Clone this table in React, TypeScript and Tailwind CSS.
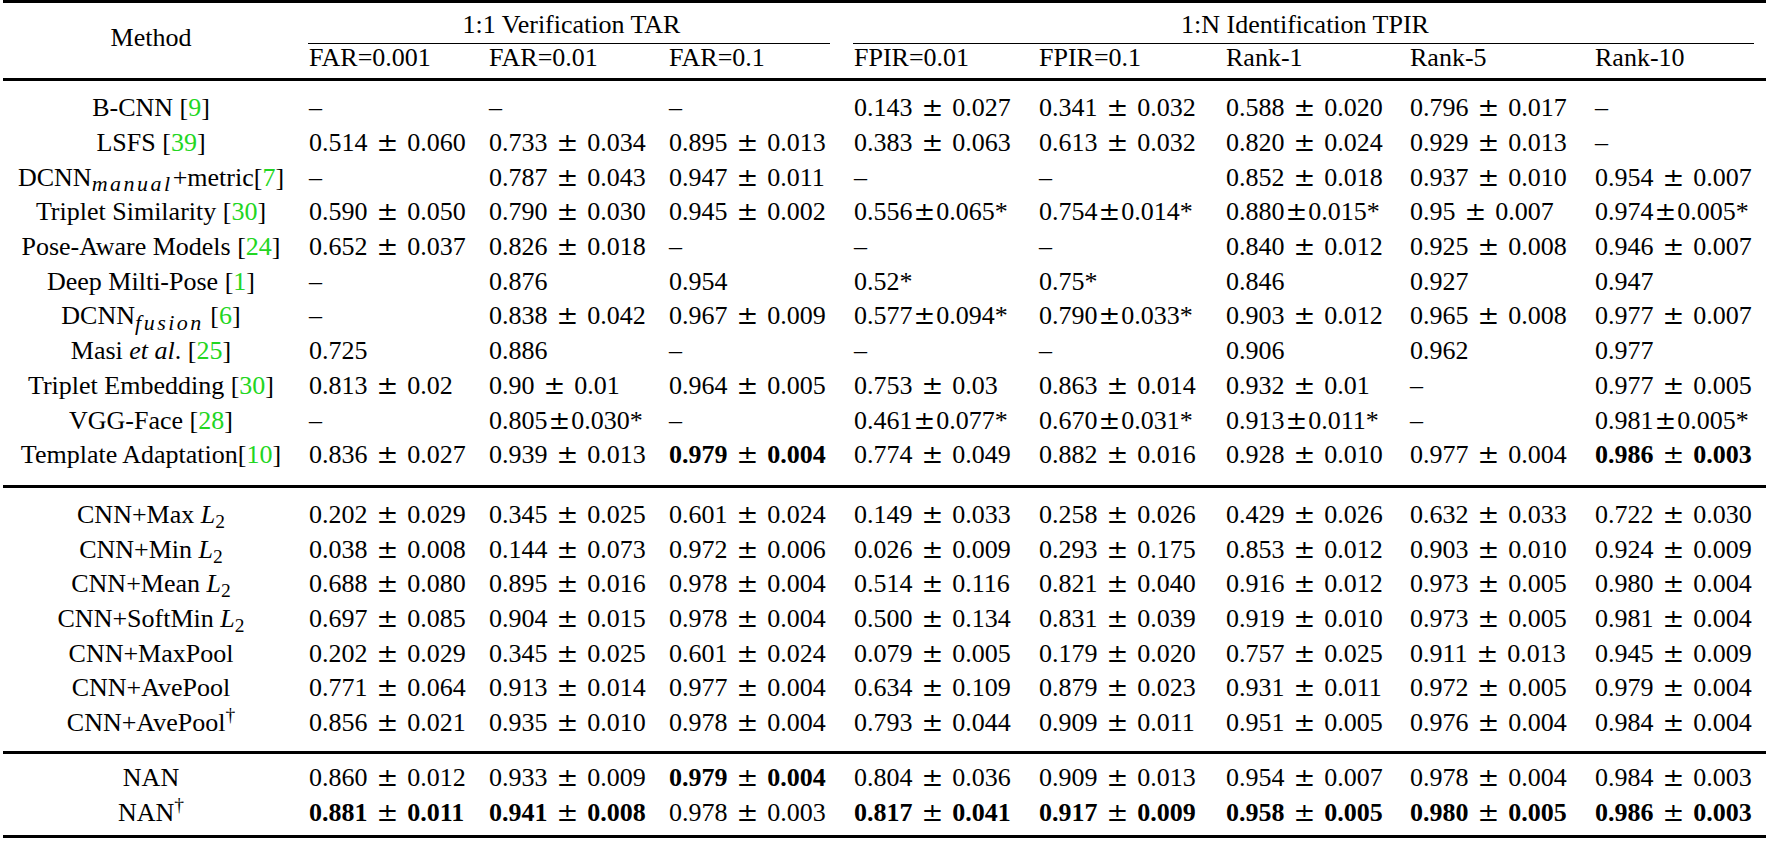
import type { ReactNode } from 'react'

const cols = 'grid grid-cols-[296px_180px_180px_185px_185px_187px_184px_185px_181px]'

function Cite({ n }: { n: string }) {
  return (
    <>
      [<span className="text-[#22d622]">{n}</span>]
    </>
  )
}

function L2() {
  return (
    <>
      <i>L</i>
      <sub>2</sub>
    </>
  )
}

function Value({ v }: { v: string }) {
  const bold = v.startsWith('!')
  const text = bold ? v.slice(1) : v
  let content: ReactNode = text

  if (text.includes(' ± ')) {
    const [a, b] = text.split(' ± ')
    content = (
      <>
        {a}
        <span className="mx-[9px] font-['DejaVu_Serif'] font-normal leading-none">±</span>
        {b}
      </>
    )
  } else if (text.includes('±')) {
    const [a, b] = text.split('±')
    content = (
      <>
        {a}
        <span className="mx-[1px] font-['DejaVu_Serif'] font-normal leading-none">±</span>
        {b}
      </>
    )
  }

  return <div className={`pl-[10px] whitespace-nowrap ${bold ? 'font-bold' : ''}`}>{content}</div>
}

interface Row {
  method: ReactNode
  values: string[]
}

const published: Row[] = [
  {
    method: <>B-CNN <Cite n="9" /></>,
    values: ['–', '–', '–', '0.143 ± 0.027', '0.341 ± 0.032', '0.588 ± 0.020', '0.796 ± 0.017', '–'],
  },
  {
    method: <>LSFS <Cite n="39" /></>,
    values: ['0.514 ± 0.060', '0.733 ± 0.034', '0.895 ± 0.013', '0.383 ± 0.063', '0.613 ± 0.032', '0.820 ± 0.024', '0.929 ± 0.013', '–'],
  },
  {
    method: (
      <>
        DCNN<sub className="text-[22px] italic tracking-[2.5px]">manual</sub>+metric<Cite n="7" />
      </>
    ),
    values: ['–', '0.787 ± 0.043', '0.947 ± 0.011', '–', '–', '0.852 ± 0.018', '0.937 ± 0.010', '0.954 ± 0.007'],
  },
  {
    method: <>Triplet Similarity <Cite n="30" /></>,
    values: ['0.590 ± 0.050', '0.790 ± 0.030', '0.945 ± 0.002', '0.556±0.065*', '0.754±0.014*', '0.880±0.015*', '0.95 ± 0.007', '0.974±0.005*'],
  },
  {
    method: <>Pose-Aware Models <Cite n="24" /></>,
    values: ['0.652 ± 0.037', '0.826 ± 0.018', '–', '–', '–', '0.840 ± 0.012', '0.925 ± 0.008', '0.946 ± 0.007'],
  },
  {
    method: <>Deep Milti-Pose <Cite n="1" /></>,
    values: ['–', '0.876', '0.954', '0.52*', '0.75*', '0.846', '0.927', '0.947'],
  },
  {
    method: (
      <>
        DCNN<sub className="text-[22px] italic tracking-[2.5px]">fusion</sub> <Cite n="6" />
      </>
    ),
    values: ['–', '0.838 ± 0.042', '0.967 ± 0.009', '0.577±0.094*', '0.790±0.033*', '0.903 ± 0.012', '0.965 ± 0.008', '0.977 ± 0.007'],
  },
  {
    method: <>Masi <i>et al</i>. <Cite n="25" /></>,
    values: ['0.725', '0.886', '–', '–', '–', '0.906', '0.962', '0.977'],
  },
  {
    method: <>Triplet Embedding <Cite n="30" /></>,
    values: ['0.813 ± 0.02', '0.90 ± 0.01', '0.964 ± 0.005', '0.753 ± 0.03', '0.863 ± 0.014', '0.932 ± 0.01', '–', '0.977 ± 0.005'],
  },
  {
    method: <>VGG-Face <Cite n="28" /></>,
    values: ['–', '0.805±0.030*', '–', '0.461±0.077*', '0.670±0.031*', '0.913±0.011*', '–', '0.981±0.005*'],
  },
  {
    method: <>Template Adaptation<Cite n="10" /></>,
    values: ['0.836 ± 0.027', '0.939 ± 0.013', '!0.979 ± 0.004', '0.774 ± 0.049', '0.882 ± 0.016', '0.928 ± 0.010', '0.977 ± 0.004', '!0.986 ± 0.003'],
  },
]

const baselines: Row[] = [
  {
    method: <>CNN+Max <L2 /></>,
    values: ['0.202 ± 0.029', '0.345 ± 0.025', '0.601 ± 0.024', '0.149 ± 0.033', '0.258 ± 0.026', '0.429 ± 0.026', '0.632 ± 0.033', '0.722 ± 0.030'],
  },
  {
    method: <>CNN+Min <L2 /></>,
    values: ['0.038 ± 0.008', '0.144 ± 0.073', '0.972 ± 0.006', '0.026 ± 0.009', '0.293 ± 0.175', '0.853 ± 0.012', '0.903 ± 0.010', '0.924 ± 0.009'],
  },
  {
    method: <>CNN+Mean <L2 /></>,
    values: ['0.688 ± 0.080', '0.895 ± 0.016', '0.978 ± 0.004', '0.514 ± 0.116', '0.821 ± 0.040', '0.916 ± 0.012', '0.973 ± 0.005', '0.980 ± 0.004'],
  },
  {
    method: <>CNN+SoftMin <L2 /></>,
    values: ['0.697 ± 0.085', '0.904 ± 0.015', '0.978 ± 0.004', '0.500 ± 0.134', '0.831 ± 0.039', '0.919 ± 0.010', '0.973 ± 0.005', '0.981 ± 0.004'],
  },
  {
    method: <>CNN+MaxPool</>,
    values: ['0.202 ± 0.029', '0.345 ± 0.025', '0.601 ± 0.024', '0.079 ± 0.005', '0.179 ± 0.020', '0.757 ± 0.025', '0.911 ± 0.013', '0.945 ± 0.009'],
  },
  {
    method: <>CNN+AvePool</>,
    values: ['0.771 ± 0.064', '0.913 ± 0.014', '0.977 ± 0.004', '0.634 ± 0.109', '0.879 ± 0.023', '0.931 ± 0.011', '0.972 ± 0.005', '0.979 ± 0.004'],
  },
  {
    method: <>CNN+AvePool<sup>†</sup></>,
    values: ['0.856 ± 0.021', '0.935 ± 0.010', '0.978 ± 0.004', '0.793 ± 0.044', '0.909 ± 0.011', '0.951 ± 0.005', '0.976 ± 0.004', '0.984 ± 0.004'],
  },
]

const ours: Row[] = [
  {
    method: <>NAN</>,
    values: ['0.860 ± 0.012', '0.933 ± 0.009', '!0.979 ± 0.004', '0.804 ± 0.036', '0.909 ± 0.013', '0.954 ± 0.007', '0.978 ± 0.004', '0.984 ± 0.003'],
  },
  {
    method: <>NAN<sup>†</sup></>,
    values: ['!0.881 ± 0.011', '!0.941 ± 0.008', '0.978 ± 0.003', '!0.817 ± 0.041', '!0.917 ± 0.009', '!0.958 ± 0.005', '!0.980 ± 0.005', '!0.986 ± 0.003'],
  },
]

const subHeaders = ['FAR=0.001', 'FAR=0.01', 'FAR=0.1', 'FPIR=0.01', 'FPIR=0.1', 'Rank-1', 'Rank-5', 'Rank-10']

function Rule() {
  return <div className="h-[3px] bg-black" />
}

function Section({ rows, className }: { rows: Row[]; className: string }) {
  return (
    <div className={className}>
      {rows.map((row, i) => (
        <div key={i} className={`${cols} leading-[34.7px]`}>
          <div className="text-center whitespace-nowrap">{row.method}</div>
          {row.values.map((v, j) => (
            <Value key={j} v={v} />
          ))}
        </div>
      ))}
    </div>
  )
}

export default function App() {
  return (
    <div className="min-h-[847px] bg-white">
      <div className="ml-[3px] w-[1763px] font-['Liberation_Serif'] text-[26px] text-black">
        <Rule />
        <div className={`${cols} grid-rows-[auto_auto] pb-[6px]`}>
          <div className="row-span-2 flex items-center justify-center">Method</div>
          <div className="col-span-3">
            <div className="pt-[5px] text-center leading-[34.7px]">1:1 Verification TAR</div>
            <div className="ml-[9px] mr-[14px] h-[1.5px] bg-black" />
          </div>
          <div className="col-span-5">
            <div className="pt-[5px] text-center leading-[34.7px]">1:N Identification TPIR</div>
            <div className="ml-[9px] mr-[12px] h-[1.5px] bg-black" />
          </div>
          {subHeaders.map((h) => (
            <div key={h} className="pl-[10px] leading-[28px] whitespace-nowrap">
              {h}
            </div>
          ))}
        </div>
        <Rule />
        <Section rows={published} className="pt-[10px] pb-[12px]" />
        <Rule />
        <Section rows={baselines} className="pt-[10px] pb-[10px]" />
        <Rule />
        <Section rows={ours} className="pt-[7px] pb-[5px]" />
        <Rule />
      </div>
    </div>
  )
}
